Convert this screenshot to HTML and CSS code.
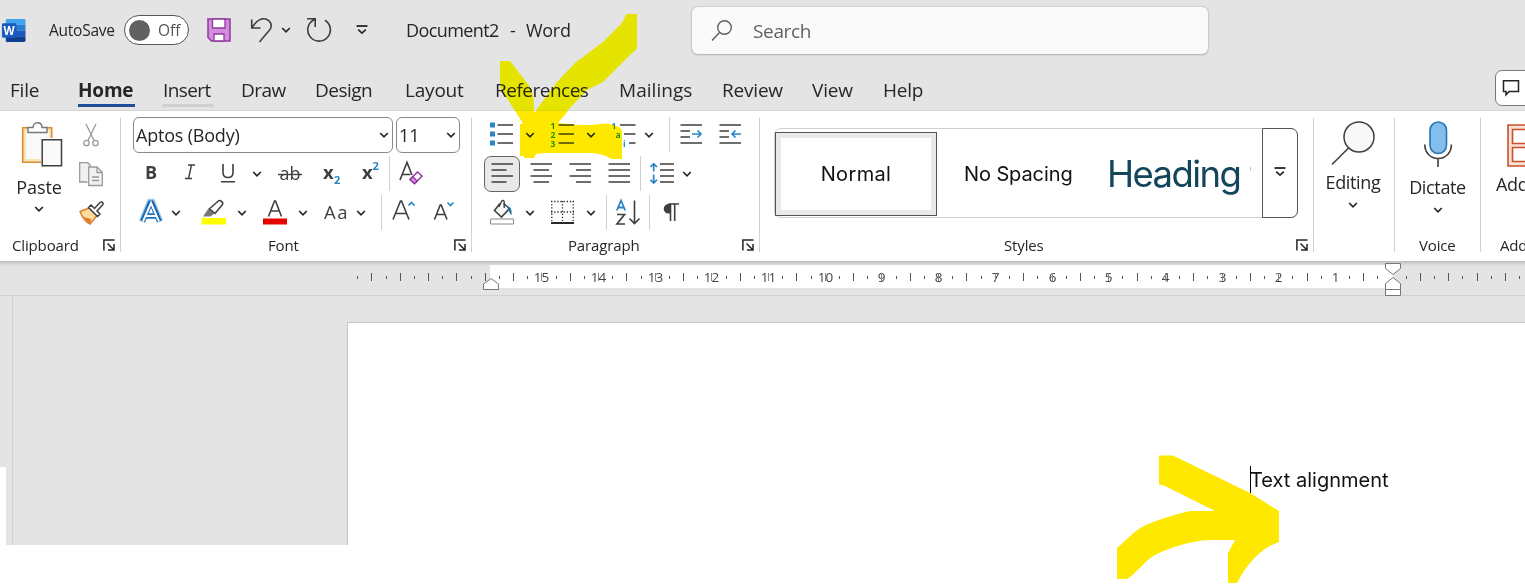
FILE: index.html
```html
<!DOCTYPE html>
<html lang="en">
<head>
<meta charset="utf-8">
<title>Document2 - Word</title>
<link rel="stylesheet" href="styles.css">
</head>
<body>
<svg class="defs" width="0" height="0" aria-hidden="true">
  <symbol id="chev" viewBox="0 0 10 8"><path d="M1.2 2 5 5.8 8.8 2" fill="none" stroke="#262626" stroke-width="1.7"/></symbol>
  <symbol id="launch" viewBox="0 0 12 12"><path d="M.9 11.5V.9H11.5M4.5 4.5 10.5 10.5M11 5v6H5" fill="none" stroke="#262626" stroke-width="1.5"/></symbol>
  <symbol id="more" viewBox="0 0 12 10"><path d="M.5 1h11" stroke="#262626" stroke-width="1.8"/><path d="M2.2 4.6 6 8.2 9.8 4.6" fill="none" stroke="#262626" stroke-width="1.6"/></symbol>
</svg>
<div class="app">
  <header class="titlebar">
    <svg class="logo" width="25" height="25" viewBox="0 0 26 26">
      <path d="M7 1h17a1.5 1.5 0 0 1 1.500 1.500V7H5V2.500A1.500 1.500 0 0 1 7 1z" fill="#41a5ee"/>
      <path d="M5 7h20.500v6H5z" fill="#2b7cd3"/><path d="M5 13h20.500v6H5z" fill="#185abd"/>
      <path d="M5 19h20.500v4.500A1.500 1.500 0 0 1 24 25H7a1.500 1.500 0 0 1-2-1.500z" fill="#103f91"/>
      <rect x="1" y="5.500" width="15" height="15" rx="1.500" fill="#185abd"/>
      <text x="8.500" y="17.300" text-anchor="middle" class="logo-w">W</text>
    </svg>
    <span class="autosave">AutoSave</span>
    <span class="toggle"><span class="knob"></span><span class="off">Off</span></span>
    <svg width="24" height="24" viewBox="0 0 24 24">
      <path d="M1 1h22v22H4.500L1 19.500z" fill="#d58ce0" stroke="#8d3a9b" stroke-width="1.500"/>
      <path d="M5.500 1h12.500v9H5.500z" fill="#fff" stroke="#8d3a9b" stroke-width="1.300"/>
      <path d="M7 16h10v7H7z" fill="#fff" stroke="#8d3a9b" stroke-width="1.300"/>
    </svg>
    <svg width="24" height="26" viewBox="0 0 24 26"><path d="M1.700 2.500V11H10.500M2 10.500C5 6 8.500 1.800 13.500 1.800c4.500 0 7.700 3 7.700 7 0 3.200-2.200 5.200-4 7L9.500 25" fill="none" stroke="#3f3f3f" stroke-width="1.600"/></svg>
    <svg class="chev qa" width="10" height="8"><use href="#chev"/></svg>
    <svg width="26" height="26" viewBox="0 0 26 26"><path d="M1 1.800h8.200V10M8.500 2.500A11.300 11.300 0 1 0 19 3.200" fill="none" stroke="#3f3f3f" stroke-width="1.600"/></svg>
    <svg class="qa" width="12" height="10"><use href="#more"/></svg>
    <span class="doc"><span class="docname">Document2</span><span>-</span><span>Word</span></span>
    <div class="search">
      <svg width="24" height="24" viewBox="0 0 24 24"><circle cx="14.500" cy="8.500" r="6.800" fill="none" stroke="#616161" stroke-width="1.400"/><path d="M9.500 13.500 2 21.500" stroke="#616161" stroke-width="1.500"/></svg>
      <span>Search</span>
    </div>
  </header>

  <nav class="tabs">
    <span class="tab loose">File</span>
    <span class="tab active">Home</span>
    <span class="tab hover">Insert</span>
    <span class="tab">Draw</span>
    <span class="tab">Design</span>
    <span class="tab loose">Layout</span>
    <span class="tab">References</span>
    <span class="tab looser">Mailings</span>
    <span class="tab loose">Review</span>
    <span class="tab loose">View</span>
    <span class="tab loose">Help</span>
    <span class="comments"><svg width="18" height="18" viewBox="0 0 18 18"><path d="M1.500 1.700h15v10.800H7L4 15.800v-3.300H1.500z" fill="none" stroke="#262626" stroke-width="1.500"/></svg></span>
  </nav>

  <section class="ribbon">
    <div class="group clipboard">
      <div class="clip-body">
        <div class="big paste">
          <svg width="42" height="46" viewBox="0 0 42 46">
            <path d="M1.700 5.700h29v34.600h-29z" fill="#fbe3b8" stroke="#e08a2c" stroke-width="1.600"/>
            <path d="M5 9h23v28H5z" fill="#fafafa"/>
            <path d="M20 16h22v30H20z" fill="#fff"/>
            <path d="M7 10.500V5.500h5C12 2.800 13.800.8 16.500.8s4.500 2 4.500 4.700h5v5z" fill="#fff" stroke="#777" stroke-width="1.400"/>
            <path d="M21.200 17.800h19.300v26H21.200z" fill="#fafafa" stroke="#3f3f3f" stroke-width="1.500"/>
          </svg>
          <span class="biglabel">Paste</span>
          <svg class="chev" width="10" height="8"><use href="#chev"/></svg>
        </div>
        <div class="clip-tools">
          <svg width="26" height="26" viewBox="0 0 26 26"><g fill="none" stroke="#9a9a9a" stroke-width="1.300"><path d="M8 2 16 18.500M18 2 10 18.500"/><circle cx="8.500" cy="21" r="2.700"/><circle cx="17.500" cy="21" r="2.700"/></g></svg>
          <svg width="26" height="26" viewBox="0 0 26 26"><g fill="#f1f1f1" stroke="#9a9a9a" stroke-width="1.300"><path d="M9.500 21H1.700V1.700h8l3 3"/><path d="M10.700 6h8.300l5.300 5.200V24.500H10.700z"/><path d="M19 6v5.500h5M14 16h7M14 19.500h7" fill="none"/></g></svg>
          <svg width="26" height="26" viewBox="0 0 26 26"><path d="M2 11.500 11 8l8 7.500-7 8.500C8 22 4 17 2 11.500z" fill="#fbdc9d" stroke="#e0782a" stroke-width="1.400"/><path d="M5 17l8 2-1 5z" fill="#e0782a"/><path d="M10.500 7.500 13 5l3.500 3.500L22 2.500c2-1.500 4 .5 2.500 2.500L19 11l3 3-2.500 2.500z" fill="#fff" stroke="#3f3f3f" stroke-width="1.500"/></svg>
        </div>
      </div>
      <div class="foot"><span class="glabel">Clipboard</span><svg class="launch" width="12" height="12"><use href="#launch"/></svg></div>
    </div>

    <div class="group font">
      <div class="row boxes">
        <span class="box name"><span class="aptos-body">Aptos (Body)</span><svg width="10" height="8"><use href="#chev"/></svg></span>
        <span class="box size"><span>11</span><svg width="10" height="8"><use href="#chev"/></svg></span>
      </div>
      <div class="row f2">
        <svg class="ic" viewBox="0 0 26 26"><text x="13" y="19" text-anchor="middle" class="g bold">B</text></svg>
        <svg class="ic" viewBox="0 0 26 26"><path d="M11 5h7M8 18.500h7M14.500 5l-3 13.500" fill="none" stroke="#3f3f3f" stroke-width="1.400"/></svg>
        <svg class="ic" viewBox="0 0 26 26"><path d="M8 4v8.500c0 3 1.800 5 5 5s5-2 5-5V4M6 21.800h14" fill="none" stroke="#3f3f3f" stroke-width="1.600"/></svg>
        <svg class="chev" width="10" height="8"><use href="#chev"/></svg>
        <svg class="ic" viewBox="0 0 26 26"><text x="13" y="20" text-anchor="middle" class="g ab">ab</text><path d="M1 14.500h24" stroke="#3f3f3f" stroke-width="1.400"/></svg>
        <svg class="ic" viewBox="0 0 26 26"><text x="5" y="19" class="g xb">x</text><text x="16" y="24" class="g two">2</text></svg>
        <svg class="ic" viewBox="0 0 26 26"><text x="5" y="19" class="g xb">x</text><text x="15.500" y="10" class="g two">2</text></svg>
        <i class="sep"></i>
        <svg class="ic" viewBox="0 0 26 26"><path d="M3 20 10 2.500 15 15M5.500 14.500h8" fill="none" stroke="#3f3f3f" stroke-width="1.600"/><path d="M13 19.500 20.500 12l4.500 4-7.500 7.700z" fill="#fff" stroke="#8d3a9b" stroke-width="1.500"/><path d="M13 19.500l2.700-2.800 4.500 4.200-2.700 2.800z" fill="#d58ce0" stroke="#8d3a9b" stroke-width="1.300"/></svg>
      </div>
      <div class="row f3">
        <svg class="ic" viewBox="0 0 26 26"><path d="M4 22.500 12 3h2l8 19.500M7.500 17h11" fill="none" stroke="#9dcbf0" stroke-width="6.600"/><path d="M4.500 22.500 12.200 4h1.600l7.700 18.500M8 17h10" fill="none" stroke="#1c6bb0" stroke-width="5"/><path d="M5 22.500 13 4l8 18.500M8 17h10" fill="none" stroke="#fff" stroke-width="1.900"/></svg>
        <svg class="chev" width="10" height="8"><use href="#chev"/></svg>
        <svg class="ic" viewBox="0 0 26 26"><path d="M1.500 19h24.500v6.500H1.500z" fill="#ffff00"/><path d="M3 17.500 8.500 9.500l6 5-4 3z" fill="#777"/><path d="M9.500 9.800 18 2.200c2-2 6 1.300 4.300 3.600L15 14.500z" fill="#fff" stroke="#3f3f3f" stroke-width="1.500"/></svg>
        <svg class="chev" width="10" height="8"><use href="#chev"/></svg>
        <svg class="ic" viewBox="0 0 26 26"><path d="M1 19.500h24v6H1z" fill="#e80000"/><path d="M6.500 17.500 12.500 2h1l6 15.500M8.500 12h9" fill="none" stroke="#3f3f3f" stroke-width="1.600"/></svg>
        <svg class="chev" width="10" height="8"><use href="#chev"/></svg>
        <svg class="ic wide" viewBox="0 0 30 26"><text x="2" y="20" class="g aa">Aa</text></svg>
        <svg class="chev" width="10" height="8"><use href="#chev"/></svg>
        <i class="sep"></i>
        <svg class="ic" viewBox="0 0 26 26"><path d="M3 20.500 10.500 2h1l7.500 18.500M5.500 14.500h11" fill="none" stroke="#3f3f3f" stroke-width="1.600"/><path d="M18.500 6.500 21.500 3.500 24.500 6.500" fill="none" stroke="#2a86c4" stroke-width="1.700"/></svg>
        <svg class="ic" viewBox="0 0 26 26"><path d="M4.500 20.500 10.200 6h1l5.800 14.500M6.500 15.500h8.500" fill="none" stroke="#3f3f3f" stroke-width="1.600"/><path d="M17.500 3.500 20.500 6.500 23.500 3.500" fill="none" stroke="#2a86c4" stroke-width="1.700"/></svg>
      </div>
      <div class="foot"><span class="glabel">Font</span><svg class="launch" width="12" height="12"><use href="#launch"/></svg></div>
    </div>

    <div class="group para">
      <div class="row p1">
        <svg class="ic" viewBox="0 0 26 26"><path d="M2 1.500h5v5H2zM2 10.500h5v5H2zM2 19.500h5v5H2z" fill="#2a86c4"/><path d="M9.500 4h15.500M9.500 13h15.500M9.500 22h15.500" stroke="#3f3f3f" stroke-width="1.600"/></svg>
        <svg class="chev" width="10" height="8"><use href="#chev"/></svg>
        <svg class="ic" viewBox="0 0 26 26"><text x="1.500" y="7.500" class="num">1</text><text x="1.500" y="16.500" class="num">2</text><text x="1.500" y="25.500" class="num">3</text><path d="M9.500 4h15.500M9.500 13h15.500M9.500 22h15.500" stroke="#3f3f3f" stroke-width="1.600"/></svg>
        <svg class="chev" width="10" height="8"><use href="#chev"/></svg>
        <svg class="ic" viewBox="0 0 26 26"><text x="0.500" y="7.500" class="num">1</text><text x="4.500" y="16.500" class="num">a</text><text x="12" y="25.500" class="num">i</text><path d="M9 4h15.500M13 13h11.500M18 22h6.500" stroke="#3f3f3f" stroke-width="1.600"/></svg>
        <svg class="chev" width="10" height="8"><use href="#chev"/></svg>
        <i class="sep"></i>
        <svg class="ic" viewBox="0 0 26 26"><path d="M2.500 4h21.500M2.500 10h9.500M2.500 16h9.500M2.500 22h21.500" stroke="#3f3f3f" stroke-width="1.600"/><path d="M14 13h9M19.500 9.500 23 13l-3.500 3.500" fill="none" stroke="#2a86c4" stroke-width="1.700"/></svg>
        <svg class="ic" viewBox="0 0 26 26"><path d="M2.500 4h21.500M2.500 10h9.500M2.500 16h9.500M2.500 22h21.500" stroke="#3f3f3f" stroke-width="1.600"/><path d="M24 13h-9M18.500 9.500 15 13l3.500 3.500" fill="none" stroke="#2a86c4" stroke-width="1.700"/></svg>
      </div>
      <div class="row p2">
        <span class="pressed"><svg class="ic" viewBox="0 0 26 26"><path d="M2.500 4h21.500M2.500 10h15M2.500 16h21.500M2.500 22h15" stroke="#3f3f3f" stroke-width="1.600"/></svg></span>
        <svg class="ic" viewBox="0 0 26 26"><path d="M2.500 4h21.500M5.500 10h15.500M2.500 16h21.500M5.500 22h15.500" stroke="#3f3f3f" stroke-width="1.600"/></svg>
        <svg class="ic" viewBox="0 0 26 26"><path d="M2.500 4h21.500M9 10h15M2.500 16h21.500M9 22h15" stroke="#3f3f3f" stroke-width="1.600"/></svg>
        <svg class="ic" viewBox="0 0 26 26"><path d="M2.500 4h21.500M2.500 10h21.500M2.500 16h21.500M2.500 22h21.500" stroke="#3f3f3f" stroke-width="1.600"/></svg>
        <i class="sep"></i>
        <svg class="ic" viewBox="0 0 26 26"><path d="M11 4h14M11 10h14M11 16h14M11 22h14" stroke="#3f3f3f" stroke-width="1.600"/><path d="M4.700 11.500V4M1.500 7l3.200-3.200L8 7M4.700 14.500v8M1.500 19.800 4.700 23 8 19.800" fill="none" stroke="#2a86c4" stroke-width="1.700"/></svg>
        <svg class="chev" width="10" height="8"><use href="#chev"/></svg>
      </div>
      <div class="row p3">
        <svg class="ic" viewBox="0 0 26 26"><path d="M2.500 20h23v5h-23z" fill="#fff" stroke="#888"/><path d="M12 4.500 6.500 11.500 13.500 18 21.500 9.500 15.500 4.500" fill="#fafafa" stroke="#3f3f3f" stroke-width="1.600"/><path d="M11 8 13.500 2.500c1-1.800 2.700-1 2.700.5v6" fill="none" stroke="#3f3f3f" stroke-width="1.400"/><path d="M18.500 7.500c4-.5 5.500 2.500 5 8.500-1.500-.5-2.500-4-3.500-6z" fill="#24719f"/></svg>
        <svg class="chev" width="10" height="8"><use href="#chev"/></svg>
        <svg class="ic" viewBox="0 0 26 26"><g fill="none" stroke="#262626" stroke-width="1.300" stroke-dasharray="1.300 1.850"><path d="M2 2.500h23M2 13h23M2.800 2v20M13.500 2v20M24.200 2v20"/></g><path d="M2 24h23" stroke="#111" stroke-width="1.800"/></svg>
        <svg class="chev" width="10" height="8"><use href="#chev"/></svg>
        <i class="sep"></i>
        <svg class="ic" viewBox="0 0 26 26"><path d="M2.800 11.500 7 1.500l4.200 10M4.200 8.500h5.600" fill="none" stroke="#2a86c4" stroke-width="1.800"/><path d="M3 15.500h7.500L3 25h8" fill="none" stroke="#3f3f3f" stroke-width="1.700"/><path d="M20.500 1.500v23M15.500 19.500l5 5 5-5" fill="none" stroke="#3f3f3f" stroke-width="1.600"/></svg>
        <i class="sep"></i>
        <svg class="ic" viewBox="0 0 26 26"><path d="M20.500 5H10.500a4.800 4.800 0 0 0 0 9.600H12V5" fill="#3f3f3f"/><path d="M12.500 5v17M16.700 5v17" fill="none" stroke="#3f3f3f" stroke-width="1.600"/><path d="M10.500 4.200h10.500v1.500H10.500z" fill="#3f3f3f"/></svg>
      </div>
      <div class="foot"><span class="glabel">Paragraph</span><svg class="launch" width="12" height="12"><use href="#launch"/></svg></div>
    </div>

    <div class="group styles">
      <div class="gallery">
        <span class="style normal">Normal</span>
        <span class="style nospace">No Spacing</span>
        <span class="style heading">Heading</span>
        <span class="tick"></span>
        <span class="expand"><svg width="12" height="10"><use href="#more"/></svg></span>
      </div>
      <div class="foot"><span class="glabel">Styles</span><svg class="launch" width="12" height="12"><use href="#launch"/></svg></div>
    </div>

    <div class="group editing">
      <div class="big">
        <svg width="46" height="46" viewBox="0 0 46 46"><circle cx="29" cy="17" r="15" fill="#f8f8f8" stroke="#3f3f3f" stroke-width="1.500"/><path d="M18.500 28 2 44.500" stroke="#3f3f3f" stroke-width="1.600"/></svg>
        <span class="biglabel">Editing</span>
        <svg class="chev" width="10" height="8"><use href="#chev"/></svg>
      </div>
      <div class="foot"></div>
    </div>

    <div class="group voice">
      <div class="big">
        <svg width="30" height="46" viewBox="0 0 30 46"><rect x="7" y="1" width="16.500" height="31.500" rx="8.200" fill="#83beec" stroke="#2476b5" stroke-width="1.600"/><path d="M1.800 23.500c0 8 5.500 14 13.300 14s13.300-6 13.300-14M15 37.500V46" fill="none" stroke="#3f3f3f" stroke-width="1.600"/></svg>
        <span class="biglabel">Dictate</span>
        <svg class="chev" width="10" height="8"><use href="#chev"/></svg>
      </div>
      <div class="foot"><span class="glabel">Voice</span></div>
    </div>

    <div class="group addins">
      <div class="big">
        <svg width="44" height="44" viewBox="0 0 44 44"><path d="M1 1h42v41H1z" fill="#fbe1d6" stroke="#c8512b" stroke-width="1.600"/><path d="M5.500 5.500h14v14h-14zM5.500 23.500h14v14h-14zM24 5.500h14v14H24zM24 23.500h14v14H24z" fill="#fff" stroke="#c8512b" stroke-width="1.600"/></svg>
        <span class="biglabel">Add-ins</span>
      </div>
      <div class="foot"><span class="glabel">Add-ins</span></div>
    </div>
  </section>

  <main class="workspace">
    <div class="ruler"><svg id="ruler" width="1525" height="35" viewBox="0 0 1525 35">
      <rect x="490" y="4" width="903" height="23" fill="#fff"/>
    </svg></div>
    <div class="desk">
      <div class="edge"><div class="edge-top"></div><div class="edge-bottom"></div></div>
      <div class="gutter"></div>
      <div class="page"><p class="text"><i class="caret"></i>Text alignment</p></div>
    </div>
  </main>

  <svg class="marks" width="1525" height="584" viewBox="0 0 1525 584">
    <path fill="#ffff00" d="M637 14V45C637 50 634 52 632 53L603 82 587 90 567 111H535.500L557 82 575 63 603 42 620 25C624 21 625 15 627 14zM500 61H510L527 83C533 91 534 96 534 111H515L500 87z"/>
    <path fill="#ffe800" d="M515 111H534L535 113 536 111H568L558 123C575 125 592 126 600 124 607 123 617 125 620 128 622 130 622 132 622 134V159H612C606 156 603 154 592 153H545L536 154 534 158H524V156H520V124H523L519 117z"/>
    <path fill="#ffe800" d="M1159 455.500H1173L1250 493 1279 511V542C1266 546 1250 558 1237 583H1228V553L1235 540H1210C1190 541 1171 547 1155 555 1144 561 1136 574 1127 579H1117V548C1128 539 1134 530 1148 524 1161 519 1176 514 1190 511H1215L1165 486 1159 484.500z"/>
  </svg>
</div>
<script src="script.js"></script>
</body>
</html>
```

FILE: styles.css
```css
* { box-sizing: border-box; }
body { margin: 0; background: #fff; font-family: "Open Sans", "Noto Sans", sans-serif; color: #262626; overflow: hidden; }
svg { display: block; flex: none; }
.defs { position: absolute; }
.app { position: relative; width: 1525px; height: 584px; overflow: hidden; isolation: isolate; background: #fff; }

.titlebar { display: grid; grid-template-columns: 48px 75px 83px 43px 31px 25px 50px 50px 286px 516px; align-items: center; height: 61px; padding-left: 1px; background: #e4e4e4; white-space: nowrap; }
.titlebar > svg { margin-top: -1px; }
.logo-w { font: bold 12px "Open Sans", sans-serif; fill: #fff; }
.autosave { font-size: 15.5px; letter-spacing: -0.25px; margin-top: -1px; }
.toggle { display: flex; align-items: center; gap: 8px; width: 65px; height: 30px; margin-top: -1px; padding-left: 4px; border: 1px solid #555; border-radius: 15px; background: #fff; }
.knob { width: 21px; height: 21px; border-radius: 50%; background: #616161; }
.off { font-size: 15.5px; color: #555; }
.doc { display: grid; grid-template-columns: 104px 16px 60px; margin-top: -1px; font-size: 18px; letter-spacing: -0.3px; }
.docname { letter-spacing: -0.6px; }
.search { display: flex; align-items: center; gap: 19px; height: 47px; padding-left: 18px; border-radius: 6px; background: #fafafa; box-shadow: 0 0 2px #aaa, 0 1px 2px #b5b5b5; font-size: 19px; color: #616161; }
.search span { letter-spacing: -0.35px; }

.tabs { display: grid; grid-template-columns: 68px 84px 79px 74px 90px 90px 124px 103px 90px 71px 612px 40px; height: 50px; padding-left: 10px; background: #e4e4e4; border-bottom: 1px solid #d6d6d6; font-size: 19px; letter-spacing: -0.5px; white-space: nowrap; }
.tab { justify-self: start; height: 46px; padding-top: 16px; line-height: 26px; border-bottom: 3px solid transparent; }
.loose { letter-spacing: -0.2px; }
.looser { letter-spacing: 0.05px; }
.active { width: 57px; font-weight: bold; letter-spacing: -0.2px; border-color: #1f4e96; }
.hover { width: 52px; padding-left: 1px; letter-spacing: -0.6px; border-color: #d0d0d0; }
.comments { margin-top: 9px; height: 36px; padding: 8px 0 0 6px; border: 1px solid #777; border-radius: 7px; background: #fff; }

.ribbon { display: flex; height: 150px; background: #fff; }
.group { display: grid; grid-template-rows: 117px 26px; flex: none; margin-top: 4px; height: 143px; background: linear-gradient(#d0d0d0, #d0d0d0) right 3px / 1px 134px no-repeat; }
.clipboard { width: 121px; }
.font { width: 351px; grid-template-rows: 39px 39px 39px 26px; }
.para { width: 288px; grid-template-rows: 39px 39px 39px 26px; }
.styles { width: 554px; }
.editing { width: 81px; }
.voice { width: 86px; }
.addins { width: 90px; }
.foot { display: flex; align-items: center; font-size: 15px; letter-spacing: -0.15px; }
.launch { margin-left: auto; }
.clipboard .foot { padding: 0 6px 0 12px; }
.font .foot { padding: 0 6px 0 147px; }
.para .foot { padding: 0 6px 0 96px; }
.styles .foot { padding: 0 6px 0 244px; }
.voice .foot { padding-left: 24px; }
.addins .foot { padding-left: 19px; }

.big { display: flex; flex-direction: column; align-items: center; padding-top: 5px; }
.biglabel { font-size: 18px; line-height: 24px; letter-spacing: -0.35px; margin-top: 7px; white-space: nowrap; }
.big .chev { margin-top: 6px; }
.clip-body { display: grid; grid-template-columns: 78px 26px; }
.paste { padding-top: 7px; }
.paste .biglabel { letter-spacing: -0.1px; }
.paste svg:first-child { margin-left: 6px; }
.clip-tools { display: grid; grid-template-rows: 39px 39px 39px; align-items: center; }
.editing .big { padding: 5px 3px 0 0; }
.editing .biglabel { margin-top: 4px; }
.editing .chev { margin-top: 7px; }
.voice .big { padding: 6px 1px 0 0; }
.voice .biglabel { margin-top: 8px; }
.voice .chev { margin-top: 7px; }
.addins .big { align-items: flex-start; padding: 9px 0 0 26px; }
.addins .biglabel { margin: 4px 0 0 -11px; }

.row { display: grid; align-items: center; }
.boxes { grid-template-columns: 260px 64px; gap: 3px; padding-left: 12px; }
.box { display: flex; align-items: center; justify-content: space-between; height: 36px; padding: 0 3px 0 2px; border: 1px solid #888; border-radius: 6px; background: #fff; font-size: 18px; }
.name span { letter-spacing: -0.2px; }
.f2 { grid-template-columns: 39px 38px 37px 25px 41px 39px 32px 8px 26px; padding-left: 17px; }
.f3 { grid-template-columns: 33px 29px 37px 25px 36px 24px 34px 25px 9px 40px 26px; padding-left: 17px; }
.p1 { grid-template-columns: 37px 24px 37px 25px 33px 25px 9px 39px 26px; padding-left: 16px; }
.p2 { grid-template-columns: 44px 39px 39px 34px 9px 33px 10px; padding-left: 12px; }
.p3 { grid-template-columns: 37px 24px 37px 20px 8px 35px 9px 26px; padding-left: 16px; }
.ic { width: 26px; height: 26px; margin-top: -1px; overflow: visible; }
.wide { width: 30px; }
.sep { width: 1px; height: 35px; background: #d0d0d0; }
.pressed { display: flex; align-items: center; justify-content: center; width: 36px; height: 36px; border: 1px solid #666; border-radius: 7px; background: #e9e9e9; }
.g { font-family: "Open Sans", sans-serif; fill: #3f3f3f; }
.bold { font-size: 18px; font-weight: bold; }
.ab { font-size: 18px; }
.xb { font-size: 18.5px; font-weight: bold; }
.two { font-size: 11px; font-weight: bold; fill: #2a86c4; }
.aa { font-size: 18.5px; letter-spacing: 1.5px; }
.num { font: bold 8.500px "Open Sans", sans-serif; fill: #2a86c4; }

.gallery { display: grid; grid-template-columns: 162px 170px 145px 10px 36px; margin: 13px 0 0 14px; width: 524px; height: 90px; border: 1px solid #cfcfcf; border-radius: 7px; align-items: center; font-family: Inter, "Liberation Sans", sans-serif; color: #111; white-space: nowrap; }
.normal { display: flex; align-items: center; justify-content: center; height: 84px; border: 1px solid #555; box-shadow: inset 0 0 0 5px #e9e9e9; font-size: 20px; letter-spacing: 0.35px; }
.nospace { padding-left: 27px; font-size: 20px; letter-spacing: -0.1px; }
.heading { font-size: 36.5px; letter-spacing: -1.6px; color: #13455b; }
.tick { width: 1px; height: 4px; margin: -10px 0 0 -2px; background: #ccc; }
.expand { display: flex; align-items: center; justify-content: center; height: 90px; margin-top: -1px; padding-bottom: 3px; border: 1px solid #555; border-radius: 0 7px 7px 0; }

.workspace { height: 284px; background: #e4e4e4; }
.ruler { height: 35px; border-bottom: 1px solid #d2d2d2; background: linear-gradient(#bdbdbd, #e4e4e4 5px); }
.ruler text { font: 13.5px "Open Sans", sans-serif; fill: #444; text-anchor: middle; }
.desk { display: grid; grid-template-columns: 12px 335px 1178px; height: 249px; }
.edge { display: grid; grid-template-rows: 171px 78px; }
.edge-bottom { width: 6px; background: #fff; }
.gutter { border-left: 1px solid #d2d2d2; }
.page { margin-top: 26px; border-top: 1px solid #c4c4c4; border-left: 1px solid #c4c4c4; background: #fff; padding: 143px 0 0 902px; }
.text { display: flex; align-items: center; margin: 0; height: 28px; font: 20px Inter, "Liberation Sans", sans-serif; color: #111; white-space: nowrap; }
.caret { width: 1px; height: 27px; margin: 0 -1px 1px 0; background: #000; }

.marks { position: absolute; left: 0; top: 0; mix-blend-mode: darken; pointer-events: none; }
```

FILE: script.js
```js
// Builds the horizontal ruler: right-to-left centimetre scale.
const ruler = document.getElementById('ruler');
const NS = 'http://www.w3.org/2000/svg';
function add(tag, attrs, text) {
  const el = document.createElementNS(NS, tag);
  for (const k in attrs) el.setAttribute(k, attrs[k]);
  if (text) el.textContent = text;
  ruler.appendChild(el);
}
const zero = 1391.6, step = 14.17;
for (let k = -9; k <= 73; k++) {
  if (k === 0) continue;
  const x = Math.round(zero - step * k);
  if (k > 0 && k <= 60 && k % 4 === 0) {
    add('text', { x: x + 0.5, y: 20.5 }, String(k / 4));
    if (k > 4) add('rect', { x: x, y: 12, width: 1, height: 8, fill: '#888' });
  } else if (k % 2 === 0) {
    add('rect', { x: x, y: 12, width: 1, height: 8, fill: '#555' });
  } else {
    add('rect', { x: x, y: 15, width: 1, height: 3, fill: '#555' });
  }
}
const marker = { fill: '#fff', stroke: '#777', 'stroke-width': 1 };
add('path', { ...marker, d: 'M483.5 28.500v-5.500l7.500-5.500 7.500 5.500v5.500z' });
add('path', { ...marker, d: 'M1385.500 2.500h15v5l-7.500 6-7.500-6z' });
add('path', { ...marker, d: 'M1385.500 34.500v-12l7.500-6 7.500 6v12zM1385.500 28.500h15' });
```
